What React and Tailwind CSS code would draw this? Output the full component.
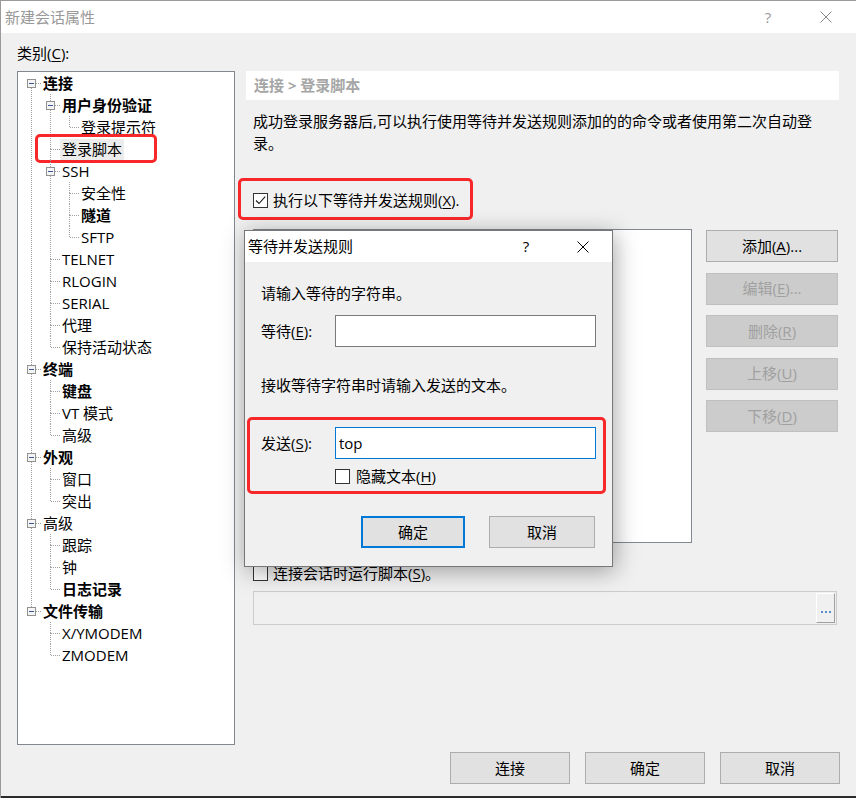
import React from "react";

const tree = [
  {
    label: "连接",
    bold: true,
    children: [
      { label: "用户身份验证", bold: true, children: [{ label: "登录提示符" }] },
      { label: "登录脚本", selected: true },
      {
        label: "SSH",
        children: [{ label: "安全性" }, { label: "隧道", bold: true }, { label: "SFTP" }],
      },
      { label: "TELNET" },
      { label: "RLOGIN" },
      { label: "SERIAL" },
      { label: "代理" },
      { label: "保持活动状态" },
    ],
  },
  {
    label: "终端",
    bold: true,
    children: [{ label: "键盘", bold: true }, { label: "VT 模式" }, { label: "高级" }],
  },
  { label: "外观", bold: true, children: [{ label: "窗口" }, { label: "突出" }] },
  {
    label: "高级",
    children: [{ label: "跟踪" }, { label: "钟" }, { label: "日志记录", bold: true }],
  },
  {
    label: "文件传输",
    bold: true,
    children: [{ label: "X/YMODEM" }, { label: "ZMODEM" }],
  },
];

function flatten(nodes, level, rails, out) {
  nodes.forEach((node, i) => {
    const last = i === nodes.length - 1;
    out.push({ ...node, level, last, first: level === 0 && i === 0, rails });
    if (node.children) flatten(node.children, level + 1, [...rails, last], out);
  });
  return out;
}

const rows = flatten(tree, 0, [], []);

const dot = { stroke: "#a0a0a0", strokeDasharray: "1 1", shapeRendering: "crispEdges" };

function Rail({ show }) {
  return (
    <svg width="19" height="22" className="shrink-0">
      {show && <line x1="9.5" y1="0" x2="9.5" y2="22" {...dot} />}
    </svg>
  );
}

function Joint({ first, last, box }) {
  return (
    <svg width="19" height="22" className="shrink-0">
      {!first && <line x1="9.5" y1="0" x2="9.5" y2={box ? 7 : 11} {...dot} />}
      {!last && <line x1="9.5" y1={box ? 16 : 11} x2="9.5" y2="22" {...dot} />}
      <line x1={box ? 14 : 10} y1="11.5" x2="19" y2="11.5" {...dot} />
      {box && (
        <>
          <rect x="5.5" y="7.5" width="8" height="8" fill="#f5f5f5" stroke="#919191" shapeRendering="crispEdges" />
          <line x1="7" y1="11.5" x2="12" y2="11.5" stroke="#3b5693" shapeRendering="crispEdges" />
        </>
      )}
    </svg>
  );
}

function Key({ c }) {
  return <span className="underline underline-offset-2">{c}</span>;
}

function CheckBox({ checked }) {
  return (
    <span className="flex h-[15px] w-[15px] shrink-0 items-center justify-center border border-[#333333] bg-white">
      {checked && (
        <svg width="11" height="11" viewBox="0 0 11 11">
          <path d="M1 5.5l3 3l6.2-6.8" fill="none" stroke="#1a1a1a" strokeWidth="1.1" />
        </svg>
      )}
    </span>
  );
}

function CloseIcon({ color = "#000" }) {
  return (
    <svg width="12" height="12" viewBox="0 0 12 12">
      <path d="M0.5 0.5L11.5 11.5M11.5 0.5L0.5 11.5" stroke={color} strokeWidth="1" />
    </svg>
  );
}

function SideButton({ children, disabled }) {
  return (
    <div
      className={
        disabled
          ? "flex h-[32px] w-[132px] items-center justify-center border border-[#bfbfbf] bg-[#cccccc] text-[#a0a0a0]"
          : "flex h-[32px] w-[132px] items-center justify-center border border-[#adadad] bg-[#e1e1e1]"
      }
    >
      {children}
    </div>
  );
}

function TreeRow({ row }) {
  return (
    <div className="relative flex h-[22px] items-center">
      <div className="flex pl-[4px]">
        {row.rails.map((isLast, k) => (
          <Rail key={k} show={!isLast} />
        ))}
        <Joint first={row.first} last={row.last} box={!!row.children} />
      </div>
      <span
        className={
          (row.selected ? "bg-[#ececec] " : "") +
          (row.bold ? "font-bold " : "") +
          "flex h-[21px] items-center whitespace-pre px-[2px]"
        }
      >
        {row.label}
      </span>
      {row.selected && (
        <div className="pointer-events-none absolute left-[17px] top-[-4px] h-[29px] w-[122px] rounded-[5px] border-[3px] border-[#f8282a]" />
      )}
    </div>
  );
}

function RuleDialog() {
  return (
    <div className="absolute left-[243px] top-[229px] flex h-[337px] w-[369px] flex-col border border-[#777777] bg-[#f0f0f0] shadow-[2px_4px_22px_rgba(0,0,0,0.35)]">
      <div className="flex h-[31px] shrink-0 items-center bg-white pl-[3px]">
        <span>等待并发送规则</span>
        <div className="ml-auto flex items-center gap-[11px] pr-[6px]">
          <span className="w-[46px] text-center">?</span>
          <span className="flex w-[46px] justify-center">
            <CloseIcon />
          </span>
        </div>
      </div>

      <div className="ml-[16px] mt-[21px] h-[20px] leading-[20px]">请输入等待的字符串。</div>
      <div className="ml-[16px] mt-[12px] flex h-[32px] items-center">
        <span className="w-[74px]">
          等待(<Key c="E" />):
        </span>
        <div className="h-[32px] w-[261px] border border-[#7a7a7a] bg-white" />
      </div>
      <div className="ml-[16px] mt-[28px] h-[20px] leading-[20px]">接收等待字符串时请输入发送的文本。</div>

      <div className="ml-[2px] mt-[22px] w-[359px] rounded-[5px] border-[3px] border-[#f8282a] pb-[5px] pl-[11px] pt-[7px]">
        <div className="flex h-[32px] items-center">
          <span className="w-[74px]">
            发送(<Key c="S" />):
          </span>
          <div className="flex h-[32px] w-[261px] items-center border border-[#0078d7] bg-white pl-[3px]">
            top
          </div>
        </div>
        <div className="ml-[74px] mt-[7px] flex h-[20px] items-center gap-[6px]">
          <CheckBox />
          <span>
            隐藏文本(<Key c="H" />)
          </span>
        </div>
      </div>

      <div className="mt-[22px] flex">
        <div className="ml-[116px] flex h-[32px] w-[104px] items-center justify-center border-2 border-[#0078d7] bg-[#e1e1e1]">
          确定
        </div>
        <div className="ml-[24px] flex h-[32px] w-[106px] items-center justify-center border border-[#adadad] bg-[#e1e1e1]">
          取消
        </div>
      </div>
    </div>
  );
}

export default function App() {
  return (
    <div className="relative flex h-[798px] w-[856px] flex-col overflow-hidden border-l border-t border-[#9a9a9a] bg-[#f0f0f0] font-['Open_Sans','Noto_Sans_CJK_SC',sans-serif] text-[15px] text-black">
      <div className="flex h-[32px] shrink-0 items-center bg-white pl-[4px] text-[#999999]">
        <span>新建会话属性</span>
        <div className="ml-auto flex items-center gap-[12px] pr-[7px]">
          <span className="w-[46px] text-center">?</span>
          <span className="flex w-[46px] justify-center">
            <CloseIcon color="#8a8a8a" />
          </span>
        </div>
      </div>

      <div className="ml-[16px] mt-[10px] h-[20px] leading-[20px]">
        类别(<Key c="C" />):
      </div>

      <div className="mt-[8px] flex h-[674px] shrink-0 pl-[16px]">
        <div className="h-[674px] w-[218px] shrink-0 border border-[#828790] bg-white">
          {rows.map((row, i) => (
            <TreeRow key={i} row={row} />
          ))}
        </div>

        <div className="ml-[11px] flex w-[593px] flex-col">
          <div className="flex h-[29px] items-center bg-white pl-[8px] font-bold text-[#a6a6a6]">
            连接 &gt; 登录脚本
          </div>
          <div className="mt-[10px] pl-[7px] leading-[22px]">
            <div>成功登录服务器后,可以执行使用等待并发送规则添加的的命令或者使用第二次自动登</div>
            <div>录。</div>
          </div>

          <div className="relative mt-[35px] flex h-[22px] items-center gap-[5px] pl-[7px]">
            <CheckBox checked />
            <span>
              执行以下等待并发送规则(<Key c="X" />).
            </span>
            <div className="pointer-events-none absolute left-[-8px] top-[-11px] h-[42px] w-[235px] rounded-[5px] border-[3px] border-[#f8282a]" />
          </div>

          <div className="mt-[18px] flex items-start pl-[7px]">
            <div className="h-[314px] w-[439px] border border-[#828790] bg-white" />
            <div className="ml-[14px] mt-[1px] flex flex-col gap-[10.5px]">
              <SideButton>
                添加(<Key c="A" />)...
              </SideButton>
              <SideButton disabled>
                编辑(<Key c="E" />)...
              </SideButton>
              <SideButton disabled>
                删除(<Key c="R" />)
              </SideButton>
              <SideButton disabled>
                上移(<Key c="U" />)
              </SideButton>
              <SideButton disabled>
                下移(<Key c="D" />)
              </SideButton>
            </div>
          </div>

          <div className="mt-[19px] flex h-[22px] items-center gap-[5px] pl-[7px]">
            <CheckBox />
            <span>
              连接会话时运行脚本(<Key c="S" />)。
            </span>
          </div>

          <div className="ml-[7px] mt-[7px] flex h-[34px] w-[584px] justify-end border border-[#cccccc] bg-[#f0f0f0] p-[1px]">
            <div className="flex h-full w-[19px] items-end justify-center gap-[2px] border-b border-l border-r border-t border-b-[#a0a0a0] border-l-white border-r-[#a0a0a0] border-t-white pb-[9px]">
              <span className="h-[2px] w-[2px] bg-[#5b8fc9]" />
              <span className="h-[2px] w-[2px] bg-[#5b8fc9]" />
              <span className="h-[2px] w-[2px] bg-[#5b8fc9]" />
            </div>
          </div>
        </div>
      </div>

      <div className="mt-[7px] flex justify-end gap-[15px] pr-[16px]">
        {["连接", "确定", "取消"].map((label) => (
          <div
            key={label}
            className="flex h-[32px] w-[120px] items-center justify-center border border-[#adadad] bg-[#e1e1e1]"
          >
            {label}
          </div>
        ))}
      </div>

      <div className="flex-1" />
      <div className="h-[2px] shrink-0 bg-[#2b2b2b]" />

      <RuleDialog />
    </div>
  );
}
